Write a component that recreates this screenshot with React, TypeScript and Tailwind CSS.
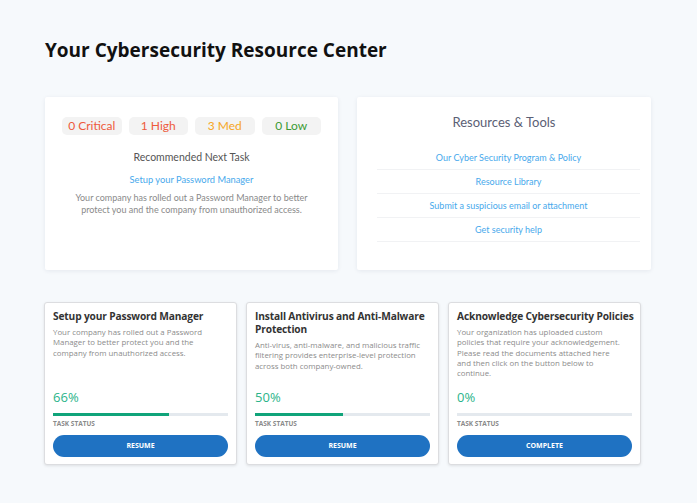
import React from "react";

const badges = [
  { label: "0 Critical", color: "text-[#ee5a3c]" },
  { label: "1 High", color: "text-[#ee5a3c]" },
  { label: "3 Med", color: "text-[#f6a623]" },
  { label: "0 Low", color: "text-[#3c9b35]" },
];

const links = [
  "Our Cyber Security Program & Policy",
  "Resource Library",
  "Submit a suspicious email or attachment",
  "Get security help",
];

const tasks = [
  {
    title: "Setup your Password Manager",
    desc: "Your company has rolled out a Password Manager to better protect you and the company from unauthorized access.",
    pct: 66,
    action: "RESUME",
  },
  {
    title: "Install Antivirus and Anti-Malware Protection",
    desc: "Anti-virus, anti-malware, and malicious traffic filtering provides enterprise-level protection across both company-owned.",
    pct: 50,
    action: "RESUME",
  },
  {
    title: "Acknowledge Cybersecurity Policies",
    desc: "Your organization has uploaded custom policies that require your acknowledgement. Please read the documents attached here and then click on the button below to continue.",
    pct: 0,
    action: "COMPLETE",
  },
];

export default function App() {
  return (
    <div className="min-h-screen bg-[#f6f9fc] pl-[45px] pt-[37px]" style={{ fontFamily: "'Open Sans', sans-serif" }}>
      <h1 className="text-[19px] leading-[27px] font-bold text-[#111]">Your Cybersecurity Resource Center</h1>

      {/* Top row */}
      <div className="mt-[33px] flex gap-[19px] w-[606px]" style={{ fontFamily: "Lato, 'Noto Sans', sans-serif" }}>
        <div className="w-[293px] h-[173px] bg-white rounded-[2px] shadow-[0_1px_4px_rgba(20,40,80,0.08)] pt-[20px] px-[17px] text-center">
          <div className="flex gap-[7px]">
            {badges.map((b) => (
              <div key={b.label} className={`flex-1 h-[18px] rounded-[5px] bg-[#f3f3f3] text-[12px] leading-[18px] ${b.color}`}>
                {b.label}
              </div>
            ))}
          </div>
          <div className="mt-[15px] text-[10.5px] leading-[14px] text-[#555]">Recommended Next Task</div>
          <div className="mt-[10px] text-[9.3px] leading-[12px] text-[#48a9ec]">Setup your Password Manager</div>
          <div className="mt-[6px] text-[9px] leading-[12px] text-[#8a8a8a]">
            Your company has rolled out a Password Manager to better protect you and the company from unauthorized access.
          </div>
        </div>

        <div className="w-[294px] h-[173px] bg-white rounded-[2px] shadow-[0_1px_4px_rgba(20,40,80,0.08)] pt-[17px]">
          <div className="text-center text-[13px] leading-[16px] text-[#5b6075]">Resources &amp; Tools</div>
          <div className="mt-[16px] ml-[20px] mr-[11px]">
            {links.map((l) => (
              <div key={l} className="h-[24px] flex items-center justify-center border-b border-[#f1f2f4] text-[9px] text-[#48a9ec]">
                {l}
              </div>
            ))}
          </div>
        </div>
      </div>

      {/* Task cards */}
      <div className="mt-[32px] -ml-px grid grid-cols-3 gap-[9px] w-[597px]">
        {tasks.map((t) => (
          <div
            key={t.title}
            className="h-[163px] flex flex-col bg-white border border-[#dcdde0] rounded-[3px] shadow-[0_1px_3px_rgba(0,0,0,0.1)] pl-[8px] pr-[6px] pt-[7px] pb-[7px]"
          >
            <div className="text-[10.2px] leading-[13px] font-bold tracking-[-0.15px] text-[#333]">{t.title}</div>
            <div className="mt-[4px] pr-[9px] text-[7.85px] leading-[10.3px] text-[#8c8c8c]">{t.desc}</div>
            <div className="mt-auto pr-[2px]">
              <div className="text-[13px] leading-[16px] text-[#2bb48a]">{t.pct}%</div>
              <div className="mt-[8px] h-[3px] bg-[#e4e9ee]">
                <div className="h-full bg-[#10a47a]" style={{ width: `${t.pct}%` }} />
              </div>
              <div className="mt-[3px] text-[6.5px] leading-[9px] font-bold text-[#8a8a8a]">TASK STATUS</div>
              <button className="mt-[7px] w-full h-[22px] rounded-full bg-[#1f72c2] text-white text-[7px] font-bold">
                {t.action}
              </button>
            </div>
          </div>
        ))}
      </div>
    </div>
  );
}
